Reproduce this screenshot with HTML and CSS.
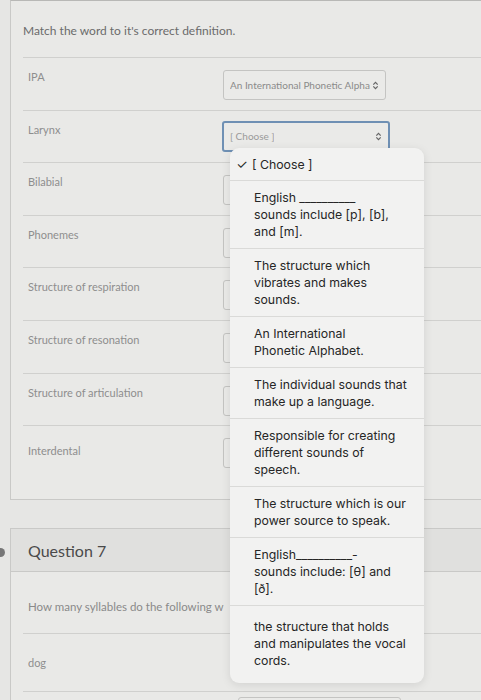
FILE: index.html
```html
<!DOCTYPE html>
<html>
<head>
<meta charset="utf-8">
<link rel="stylesheet" href="styles.css">
</head>
<body>
<div class="page">
  <div class="card q6">
    <div class="inner">
      <div class="prompt">Match the word to it's correct definition.</div>
      <div class="row"><span class="label">IPA</span><div class="select"><span>An International Phonetic Alpha</span><svg class="arr" viewBox="0 0 8 10"><path d="M1.5 4 L4 1.5 L6.5 4 M1.5 6 L4 8.5 L6.5 6" fill="none" stroke="#666" stroke-width="1.4"/></svg></div></div>
      <div class="row"><span class="label">Larynx</span><div class="select focus"><span>[ Choose ]</span><svg class="arr" viewBox="0 0 8 10"><path d="M1.5 4 L4 1.5 L6.5 4 M1.5 6 L4 8.5 L6.5 6" fill="none" stroke="#666" stroke-width="1.4"/></svg></div></div>
      <div class="row"><span class="label">Bilabial</span><div class="select"></div></div>
      <div class="row"><span class="label">Phonemes</span><div class="select"></div></div>
      <div class="row"><span class="label">Structure of respiration</span><div class="select"></div></div>
      <div class="row"><span class="label">Structure of resonation</span><div class="select"></div></div>
      <div class="row"><span class="label">Structure of articulation</span><div class="select"></div></div>
      <div class="row last"><span class="label">Interdental</span><div class="select"></div></div>
    </div>
  </div>

  <div class="card q7">
    <span class="flag"></span>
    <div class="qhead">Question 7</div>
    <div class="inner">
      <div class="prompt2">How many syllables do the following w</div>
      <div class="row2"><span class="label">dog</span><div class="select"></div></div>
      <div class="row2 short"><span class="label"></span><div class="select"></div></div>
    </div>
  </div>
</div>

<div class="menu">
  <div class="item first"><span class="check">✓</span>[ Choose ]</div>
  <div class="item">English __________<br>sounds include [p], [b],<br>and [m].</div>
  <div class="item">The structure which<br>vibrates and makes<br>sounds.</div>
  <div class="item">An International<br>Phonetic Alphabet.</div>
  <div class="item">The individual sounds that<br>make up a language.</div>
  <div class="item">Responsible for creating<br>different sounds of<br>speech.</div>
  <div class="item">The structure which is our<br>power source to speak.</div>
  <div class="item">English__________-<br>sounds include: [θ] and<br>[ð].</div>
  <div class="item lastitem">the structure that holds<br>and manipulates the vocal<br>cords.</div>
</div>
</body>
</html>
```

FILE: styles.css
```css
html, body {
  margin: 0;
  padding: 0;
  height: 700px;
  overflow: hidden;
}
body {
  background: #e6e6e4;
  font-family: Lato, "Liberation Sans", sans-serif;
  position: relative;
}
.page {
  padding-left: 10px;
}
.card {
  border: 1px solid #c9c9c7;
  border-right: none;
  background: #e9e9e7;
}
.q6 {
  border-top-color: #b8b8b6;
  height: 500px;
  box-sizing: border-box;
}
.inner {
  margin-left: 12px;
}
.prompt {
  height: 56px;
  box-sizing: border-box;
  padding-top: 22px;
  font-size: 12px;
  color: #6b6b6b;
}
.row {
  height: 52.6px;
  border-top: 1px solid #d0d0ce;
  display: flex;
  align-items: flex-start;
  box-sizing: border-box;
}
.label {
  width: 195px;
  padding-left: 5px;
  padding-top: 12px;
  font-size: 11px;
  color: #8e8e8e;
}
.row.last .label {
  padding-top: 18px;
}
.select {
  margin-top: 12px;
  width: 163px;
  height: 30px;
  box-sizing: border-box;
  border: 1px solid #c4c4c2;
  border-radius: 3px;
  background: #eaeae8;
  display: flex;
  align-items: center;
  justify-content: space-between;
  padding: 0 6px;
  font-size: 10px;
  color: #8a8a8a;
  overflow: hidden;
  white-space: nowrap;
}
.select span {
  overflow: hidden;
}
.select.focus {
  border: 2px solid #6f90b4;
  width: 168px;
  height: 31px;
  margin-top: 10px;
  margin-left: -1px;
  color: #9a9a9a;
}
.arr {
  width: 7px;
  height: 9px;
  flex: none;
  margin-left: 2px;
}
.q7 {
  margin-top: 28px;
  position: relative;
}
.flag {
  position: absolute;
  left: -11px;
  top: 19px;
  width: 5px;
  height: 9px;
  border-radius: 0 5px 5px 0;
  background: #777;
}
.qhead {
  height: 43px;
  box-sizing: border-box;
  background: #e0e0de;
  border-bottom: 1px solid #c9c9c7;
  padding: 12px 0 0 17px;
  font-size: 16px;
  color: #4a4a4a;
}
.prompt2 {
  height: 61px;
  box-sizing: border-box;
  padding-top: 28px;
  padding-left: 5px;
  font-size: 11.5px;
  color: #8a8a8a;
  white-space: nowrap;
}
.row2 {
  height: 58px;
  border-top: 1px solid #d0d0ce;
  display: flex;
  box-sizing: border-box;
}
.row2 .label {
  padding-top: 22px;
}
.row2 .select {
  margin-top: 15px;
  margin-left: 15px;
}
.row2.short .select {
  margin-top: 5px;
}
.menu {
  position: absolute;
  left: 230px;
  top: 148px;
  width: 194px;
  background: #f2f2f1;
  border-radius: 9px;
  box-shadow: 0 2px 10px rgba(0,0,0,0.10);
  font-family: Inter, "Liberation Sans", sans-serif;
  font-size: 12.3px;
  line-height: 17px;
  color: #262626;
}
.item {
  padding: 8px 0 8px 24px;
  border-top: 1px solid #dadad8;
}
.item.first {
  border-top: none;
  padding: 8px 0 7px 2px;
  display: flex;
  align-items: center;
}
.check {
  width: 20px;
  text-align: center;
  font-size: 13px;
}
.item.lastitem {
  padding-top: 12px;
  padding-bottom: 14px;
}
```
